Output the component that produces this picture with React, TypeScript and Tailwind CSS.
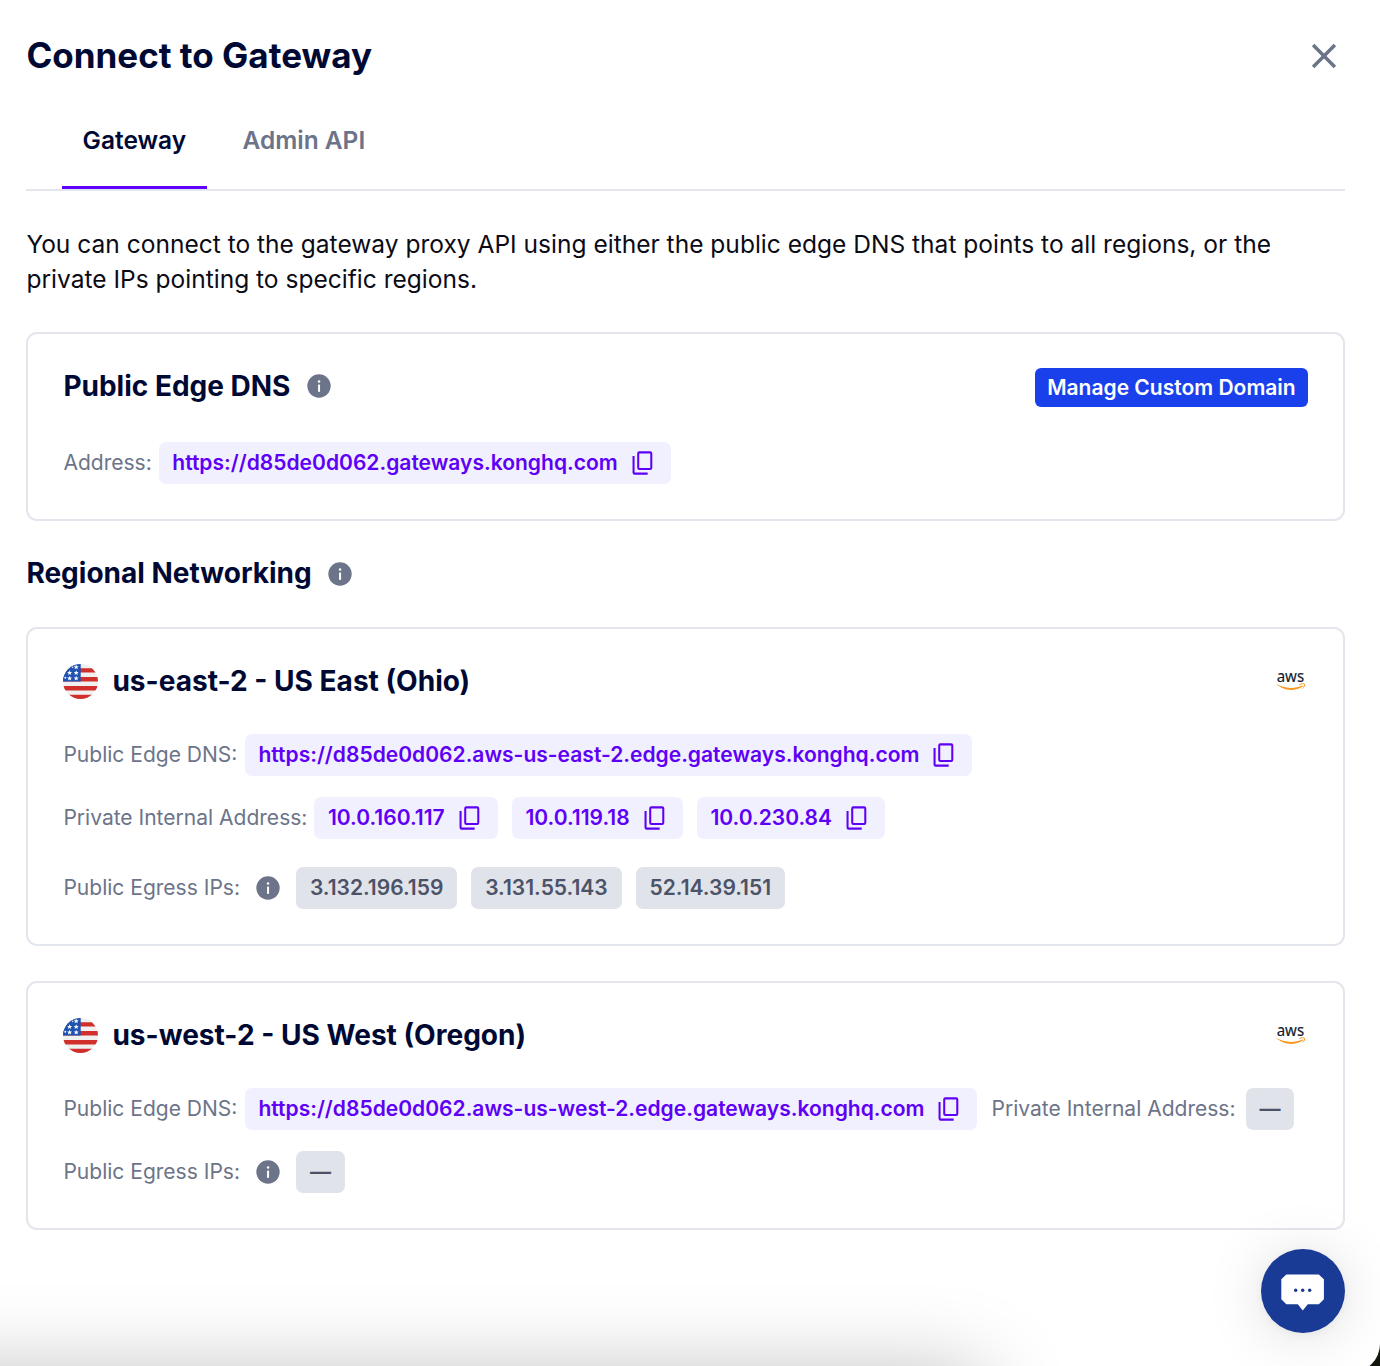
import type { ReactNode } from "react";

function InfoIcon() {
  return (
    <svg viewBox="0 0 24 24" className="h-7 w-7 shrink-0" aria-hidden="true">
      <circle cx="12" cy="12" r="10" fill="#6c7489" />
      <rect x="11.2" y="10.8" width="1.7" height="6.2" fill="#fff" />
      <circle cx="12.05" cy="8.1" r="1.05" fill="#fff" />
    </svg>
  );
}

function CopyIcon() {
  return (
    <svg viewBox="0 0 24 24" className="h-7 w-7 shrink-0" fill="none" stroke="#5e00f5" strokeWidth="1.75" aria-hidden="true">
      <rect x="7.9" y="2.9" width="11.2" height="14.2" rx="1" />
      <path d="M3.9 6v14.1a1 1 0 0 0 1 1H16" />
    </svg>
  );
}

function FlagIcon() {
  const stars = [
    [13.2, 3],
    [6.6, 8.8], [13.2, 8.8],
    [6.6, 14.2], [13.2, 14.2],
  ];
  return (
    <svg viewBox="0 0 35 35" className="h-[35px] w-[35px] shrink-0" aria-hidden="true">
      <clipPath id="flag-clip">
        <circle cx="17.5" cy="17.5" r="17.5" />
      </clipPath>
      <g clipPath="url(#flag-clip)">
        <rect width="35" height="35" fill="#f1f0f0" />
        <path fill="#d02f2b" d="M0 4.2h35v4.3H0zM0 13.1h35v4.4H0zM0 22h35v4.4H0zM0 30.7h35V35H0z" />
        <rect width="17.7" height="17.5" fill="#1f51b1" />
        {stars.map(([x, y], i) => (
          <path
            key={i}
            transform={`translate(${x} ${y})`}
            fill="#f4f6fb"
            d="M0-2.5.75-.8 2.5-.7 1.2.5 1.6 2.2 0 1.3-1.6 2.2-1.2.5-2.5-.7-.75-.8z"
          />
        ))}
        <circle cx="2.3" cy="13.8" r="1" fill="#f4f6fb" />
        <circle cx="9.6" cy="3.4" r=".8" fill="#c9d6ee" />
      </g>
    </svg>
  );
}

function AwsLogo() {
  return (
    <svg viewBox="0.3 -5 32 27" className="h-[27px] w-8 shrink-0" aria-label="aws">
      <text
        x="1"
        y="13"
        textLength="27.4"
        lengthAdjust="spacingAndGlyphs"
        fontSize="16.6"
        fill="#10192b"
        stroke="#10192b"
        strokeWidth="0.15"
        className="font-['Noto_Sans',sans-serif]"
      >
        aws
      </text>
      <path d="M.4 14.8C7.6 19.4 18 20.4 26.8 16.6l.4.9C18.6 23 7 21.6.4 14.8z" fill="#f7981f" />
      <path d="M23.9 15.5c1.7-1.1 4.5-1 5-.4.3.6-.3 3.1-1.8 4.2" fill="none" stroke="#f7981f" strokeWidth="1" strokeLinecap="round" />
    </svg>
  );
}

function CopyChip({ children }: { children: ReactNode }) {
  return (
    <span className="flex h-[42px] items-center gap-[11px] rounded-[7px] bg-[#f1f0ff] pr-3.5 pl-[13.5px] font-semibold text-[#5e00f5]">
      {children}
      <CopyIcon />
    </span>
  );
}

function Chip({ children }: { children: ReactNode }) {
  return (
    <span className="flex h-[42px] items-center rounded-[7px] bg-[#e0e4ea] px-[13.9px] font-semibold text-[#4c5268]">
      {children}
    </span>
  );
}

function Label({ children }: { children: ReactNode }) {
  return <span className="text-[#6c7489]">{children}</span>;
}

function Card({ children }: { children: ReactNode }) {
  return <section className="rounded-[11px] border-2 border-[#e3e6ec] px-[35px] pb-[35px]">{children}</section>;
}

function RegionHeader({ name }: { name: string }) {
  return (
    <div className="flex h-[70px] items-end justify-between">
      <div className="flex items-center gap-3.5">
        <FlagIcon />
        <h3 className="text-[28.05px] leading-[35px] font-bold">{name}</h3>
      </div>
      <div className="flex h-[35px] items-start">
        <AwsLogo />
      </div>
    </div>
  );
}

export default function App() {
  return (
    <div className="relative h-[1366px] w-[1380px] overflow-hidden bg-[#11150a] font-['Inter',sans-serif]">
      <div className="h-[1372px] overflow-hidden rounded-br-[28px] bg-white pr-[35px] pl-[26.4px] text-[21.04px] whitespace-nowrap text-[#000933]">
        <header className="flex items-start justify-between pt-[34px] pb-px">
          <h1 className="text-[35px] leading-[42px] font-bold">Connect to Gateway</h1>
          <button aria-label="Close" className="mt-px h-[42px] w-[42px]">
            <svg viewBox="0 0 42 42" className="h-[42px] w-[42px]" fill="none" stroke="#6c7489" strokeWidth="3.5">
              <path d="M10.1 10.1 31.9 31.9M31.9 10.1 10.1 31.9" />
            </svg>
          </button>
        </header>

        <nav className="mt-[26px] flex h-[87px] border-b-2 border-[#e3e6ec] pl-[35.4px] text-[24.5px] leading-[35px] font-semibold">
          <div className="h-[85px] border-b-[3px] border-[#5e00ff] px-[20.8px] pt-[19px]">Gateway</div>
          <div className="ml-[14.5px] px-[21px] pt-[19px] text-[#6c7489]">Admin API</div>
        </nav>

        <p className="mt-[36px] text-[24.54px] leading-[35px] text-[#0b0b16]">
          You can connect to the gateway proxy API using either the public edge DNS that points to all regions, or the
          <br />
          private IPs pointing to specific regions.
        </p>

        <div className="mt-[35px]">
          <Card>
            <div className="flex items-start justify-between pt-[34px]">
              <div className="flex items-center gap-[15px]">
                <h2 className="pt-px text-[28px] leading-[35px] font-bold">Public Edge DNS</h2>
                <InfoIcon />
              </div>
              <button className="h-[39px] rounded-[6px] bg-[#1a40ec] px-[12.3px] text-[21px] font-semibold text-white">
                Manage Custom Domain
              </button>
            </div>
            <div className="mt-[35px] flex items-center gap-[7px]">
              <Label>Address:</Label>
              <CopyChip>https://d85de0d062.gateways.konghq.com</CopyChip>
            </div>
          </Card>
        </div>

        <div className="mt-[35px] flex items-center gap-[14.2px]">
          <h2 className="text-[28px] leading-[35px] font-bold">Regional Networking</h2>
          <InfoIcon />
        </div>

        <div className="mt-[36px] flex flex-col gap-[35px]">
          <Card>
            <RegionHeader name="us-east-2 - US East (Ohio)" />
            <div className="mt-[35px] flex items-center gap-[7.5px]">
              <Label>Public Edge DNS:</Label>
              <CopyChip>https://d85de0d062.aws-us-east-2.edge.gateways.konghq.com</CopyChip>
            </div>
            <div className="mt-[21px] flex items-center gap-[7px]">
              <Label>Private Internal Address:</Label>
              <div className="flex gap-[14.2px]">
                <CopyChip>10.0.160.117</CopyChip>
                <CopyChip>10.0.119.18</CopyChip>
                <CopyChip>10.0.230.84</CopyChip>
              </div>
            </div>
            <div className="mt-7 flex items-center gap-3.5">
              <Label>Public Egress IPs:</Label>
              <InfoIcon />
              <Chip>3.132.196.159</Chip>
              <Chip>3.131.55.143</Chip>
              <Chip>52.14.39.151</Chip>
            </div>
          </Card>

          <Card>
            <RegionHeader name="us-west-2 - US West (Oregon)" />
            <div className="mt-[35px] flex items-center gap-3.5">
              <div className="flex items-center gap-[7.5px]">
                <Label>Public Edge DNS:</Label>
                <CopyChip>https://d85de0d062.aws-us-west-2.edge.gateways.konghq.com</CopyChip>
              </div>
              <div className="flex items-center gap-[10px]">
                <Label>Private Internal Address:</Label>
                <Chip>—</Chip>
              </div>
            </div>
            <div className="mt-[21px] flex items-center gap-3.5">
              <Label>Public Egress IPs:</Label>
              <InfoIcon />
              <Chip>—</Chip>
            </div>
          </Card>
        </div>
      </div>

      <div className="absolute top-[1372px] -left-[100px] h-[200px] w-[1082px] shadow-[0_0_84px_rgba(0,0,0,0.25)]" />

      <button
        aria-label="Open chat"
        className="absolute top-[1248.5px] left-[1261px] h-[84px] w-[84px] rounded-full bg-[#193a95] shadow-[0_4px_60px_rgba(0,0,0,0.13),0_2px_10px_rgba(0,0,0,0.05)]"
      >
        <svg viewBox="0 0 84 84" className="h-[84px] w-[84px]" aria-hidden="true">
          <path fill="#fff" d="M25.3 25.5H57.8L62.9 30.3V50.2L57.8 55.3H46.8L41.8 61.5L36.8 55.3H25.3L20.3 50.2V30.3Z" />
          <g fill="#193a95">
            <circle cx="34.7" cy="41.2" r="1.7" />
            <circle cx="41.7" cy="41.2" r="1.7" />
            <circle cx="48.7" cy="41.2" r="1.7" />
          </g>
        </svg>
      </button>
    </div>
  );
}
